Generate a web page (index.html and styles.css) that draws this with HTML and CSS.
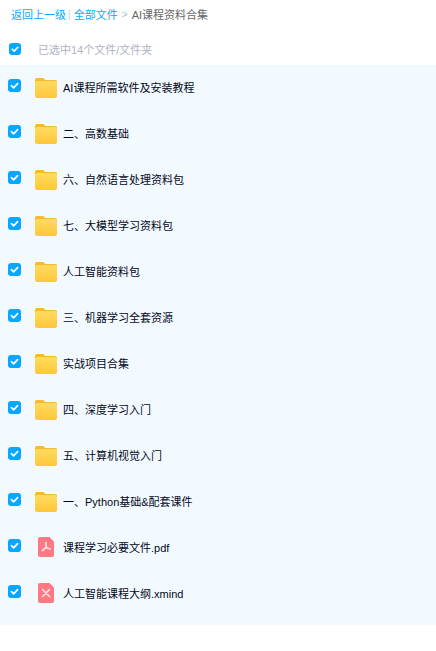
FILE: index.html
```html
<!DOCTYPE html>
<html lang="zh-CN">
<head>
  <meta charset="UTF-8">
  <title>AI课程资料合集</title>
  <link rel="stylesheet" href="styles.css">
</head>
<body>

  <!-- Shared folder gradient -->
  <svg class="defs" width="0" height="0">
    <defs>
      <linearGradient id="folderFill" x1="0" y1="0" x2="0" y2="1">
        <stop offset="0" stop-color="#ffdc5f"/>
        <stop offset="1" stop-color="#ffc63a"/>
      </linearGradient>
    </defs>
  </svg>

  <!-- Breadcrumb -->
  <div class="crumbs">
    <a class="crumb-link" href="#">返回上一级</a>
    <span class="crumb-bar">|</span>
    <a class="crumb-link" href="#">全部文件</a>
    <span class="crumb-arrow">&gt;</span>
    <span class="crumb-current">AI课程资料合集</span>
  </div>

  <!-- Selected count -->
  <div class="select-all">
    <span class="check">
      <svg viewBox="0 0 13 13"><path d="M3.4 6.7l2.2 2.1 4-4.2"/></svg>
    </span>
    <span class="select-text">已选中14个文件/文件夹</span>
  </div>

  <!-- File list -->
  <div class="file-list">
    <div class="file-row">
      <span class="check"><svg viewBox="0 0 13 13"><path d="M3.4 6.7l2.2 2.1 4-4.2"/></svg></span>
      <svg class="folder" viewBox="0 0 22 20"><path class="folder-back" d="M2 0h5.500c.8 0 1.200.3 1.800.9L10.500 2H20a2 2 0 0 1 2 2v3H0V2a2 2 0 0 1 2-2z"/><rect class="folder-front" y="3" width="22" height="17" rx="2.500"/></svg>
      <span class="file-name">AI课程所需软件及安装教程</span>
    </div>
    <div class="file-row">
      <span class="check"><svg viewBox="0 0 13 13"><path d="M3.4 6.7l2.2 2.1 4-4.2"/></svg></span>
      <svg class="folder" viewBox="0 0 22 20"><path class="folder-back" d="M2 0h5.500c.8 0 1.200.3 1.800.9L10.500 2H20a2 2 0 0 1 2 2v3H0V2a2 2 0 0 1 2-2z"/><rect class="folder-front" y="3" width="22" height="17" rx="2.500"/></svg>
      <span class="file-name">二、高数基础</span>
    </div>
    <div class="file-row">
      <span class="check"><svg viewBox="0 0 13 13"><path d="M3.4 6.7l2.2 2.1 4-4.2"/></svg></span>
      <svg class="folder" viewBox="0 0 22 20"><path class="folder-back" d="M2 0h5.500c.8 0 1.200.3 1.800.9L10.500 2H20a2 2 0 0 1 2 2v3H0V2a2 2 0 0 1 2-2z"/><rect class="folder-front" y="3" width="22" height="17" rx="2.500"/></svg>
      <span class="file-name">六、自然语言处理资料包</span>
    </div>
    <div class="file-row">
      <span class="check"><svg viewBox="0 0 13 13"><path d="M3.4 6.7l2.2 2.1 4-4.2"/></svg></span>
      <svg class="folder" viewBox="0 0 22 20"><path class="folder-back" d="M2 0h5.500c.8 0 1.200.3 1.800.9L10.500 2H20a2 2 0 0 1 2 2v3H0V2a2 2 0 0 1 2-2z"/><rect class="folder-front" y="3" width="22" height="17" rx="2.500"/></svg>
      <span class="file-name">七、大模型学习资料包</span>
    </div>
    <div class="file-row">
      <span class="check"><svg viewBox="0 0 13 13"><path d="M3.4 6.7l2.2 2.1 4-4.2"/></svg></span>
      <svg class="folder" viewBox="0 0 22 20"><path class="folder-back" d="M2 0h5.500c.8 0 1.200.3 1.800.9L10.500 2H20a2 2 0 0 1 2 2v3H0V2a2 2 0 0 1 2-2z"/><rect class="folder-front" y="3" width="22" height="17" rx="2.500"/></svg>
      <span class="file-name">人工智能资料包</span>
    </div>
    <div class="file-row">
      <span class="check"><svg viewBox="0 0 13 13"><path d="M3.4 6.7l2.2 2.1 4-4.2"/></svg></span>
      <svg class="folder" viewBox="0 0 22 20"><path class="folder-back" d="M2 0h5.500c.8 0 1.200.3 1.800.9L10.500 2H20a2 2 0 0 1 2 2v3H0V2a2 2 0 0 1 2-2z"/><rect class="folder-front" y="3" width="22" height="17" rx="2.500"/></svg>
      <span class="file-name">三、机器学习全套资源</span>
    </div>
    <div class="file-row">
      <span class="check"><svg viewBox="0 0 13 13"><path d="M3.4 6.7l2.2 2.1 4-4.2"/></svg></span>
      <svg class="folder" viewBox="0 0 22 20"><path class="folder-back" d="M2 0h5.500c.8 0 1.200.3 1.800.9L10.500 2H20a2 2 0 0 1 2 2v3H0V2a2 2 0 0 1 2-2z"/><rect class="folder-front" y="3" width="22" height="17" rx="2.500"/></svg>
      <span class="file-name">实战项目合集</span>
    </div>
    <div class="file-row">
      <span class="check"><svg viewBox="0 0 13 13"><path d="M3.4 6.7l2.2 2.1 4-4.2"/></svg></span>
      <svg class="folder" viewBox="0 0 22 20"><path class="folder-back" d="M2 0h5.500c.8 0 1.200.3 1.800.9L10.500 2H20a2 2 0 0 1 2 2v3H0V2a2 2 0 0 1 2-2z"/><rect class="folder-front" y="3" width="22" height="17" rx="2.500"/></svg>
      <span class="file-name">四、深度学习入门</span>
    </div>
    <div class="file-row">
      <span class="check"><svg viewBox="0 0 13 13"><path d="M3.4 6.7l2.2 2.1 4-4.2"/></svg></span>
      <svg class="folder" viewBox="0 0 22 20"><path class="folder-back" d="M2 0h5.500c.8 0 1.200.3 1.800.9L10.500 2H20a2 2 0 0 1 2 2v3H0V2a2 2 0 0 1 2-2z"/><rect class="folder-front" y="3" width="22" height="17" rx="2.500"/></svg>
      <span class="file-name">五、计算机视觉入门</span>
    </div>
    <div class="file-row">
      <span class="check"><svg viewBox="0 0 13 13"><path d="M3.4 6.7l2.2 2.1 4-4.2"/></svg></span>
      <svg class="folder" viewBox="0 0 22 20"><path class="folder-back" d="M2 0h5.500c.8 0 1.200.3 1.800.9L10.500 2H20a2 2 0 0 1 2 2v3H0V2a2 2 0 0 1 2-2z"/><rect class="folder-front" y="3" width="22" height="17" rx="2.500"/></svg>
      <span class="file-name">一、Python基础&amp;配套课件</span>
    </div>
    <div class="file-row">
      <span class="check"><svg viewBox="0 0 13 13"><path d="M3.4 6.7l2.2 2.1 4-4.2"/></svg></span>
      <svg class="doc" viewBox="0 0 16 20">
        <path class="doc-body" d="M2 0h9.500L16 4.500V18a2 2 0 0 1-2 2H2a2 2 0 0 1-2-2V2a2 2 0 0 1 2-2z"/>
        <path class="doc-mark" d="M8 5.500v5M8 10.500l-3.500 3M8 10.500l4 1.500"/>
      </svg>
      <span class="file-name">课程学习必要文件.pdf</span>
    </div>
    <div class="file-row">
      <span class="check"><svg viewBox="0 0 13 13"><path d="M3.4 6.7l2.2 2.1 4-4.2"/></svg></span>
      <svg class="doc" viewBox="0 0 16 20">
        <path class="doc-body" d="M2 0h9.500L16 4.500V18a2 2 0 0 1-2 2H2a2 2 0 0 1-2-2V2a2 2 0 0 1 2-2z"/>
        <path class="doc-mark" d="M4.500 6.500l7 7M11.500 6.500l-7 7"/>
      </svg>
      <span class="file-name">人工智能课程大纲.xmind</span>
    </div>
  </div>

</body>
</html>
```

FILE: styles.css
```css
* { margin: 0; padding: 0; box-sizing: border-box; }

body {
  font-family: "Liberation Sans", "Noto Sans CJK SC", sans-serif;
  font-size: 11px;
  background-color: #fff;
  color: #03081a;
}

.defs {
  display: block;
}

/* Breadcrumb */
.crumbs {
  display: flex;
  align-items: center;
  height: 28px;
  padding-left: 11px;
}

.crumb-link {
  color: #09aaff;
  text-decoration: none;
}

.crumb-bar {
  color: #c4d8e8;
  margin: 0 3px 0 2px;
}

.crumb-arrow {
  color: #bbb;
  margin: 0 4px;
  font-size: 10px;
}

.crumb-current {
  color: #666;
}

/* Selected count */
.select-all {
  display: flex;
  align-items: center;
  height: 37px;
  padding: 5px 0 0 9px;
}

.select-text {
  color: #afb3bf;
  margin-left: 17px;
}

.select-all .check {
  width: 12px;
  height: 12px;
}

.check {
  display: flex;
  flex-shrink: 0;
  width: 13px;
  height: 13px;
  background-color: #06a7ff;
  border-radius: 3px;
}

.check svg {
  width: 100%;
  height: 100%;
}

.check path {
  fill: none;
  stroke: #fff;
  stroke-width: 1.700;
  stroke-linecap: round;
  stroke-linejoin: round;
}

/* File list */
.file-list {
  background-color: #f3faff;
  padding-bottom: 8px;
}

.file-row {
  display: flex;
  align-items: center;
  height: 46px;
  padding-left: 8px;
}

.file-row .check {
  margin-top: -5px;
}

.folder {
  width: 22px;
  height: 20px;
  margin: -1px 6px 0 14px;
}

.folder-back { fill: #f9b92c; }
.folder-front { fill: url(#folderFill); }

.doc {
  width: 16px;
  height: 20px;
  margin: -2px 9px 0 17px;
}

.doc-body { fill: #ff7883; }

.doc-mark {
  fill: none;
  stroke: #ffe3e5;
  stroke-width: 1.700;
  stroke-linecap: round;
  stroke-linejoin: round;
}

.file-name {
  white-space: nowrap;
  margin-top: -3px;
}
```
